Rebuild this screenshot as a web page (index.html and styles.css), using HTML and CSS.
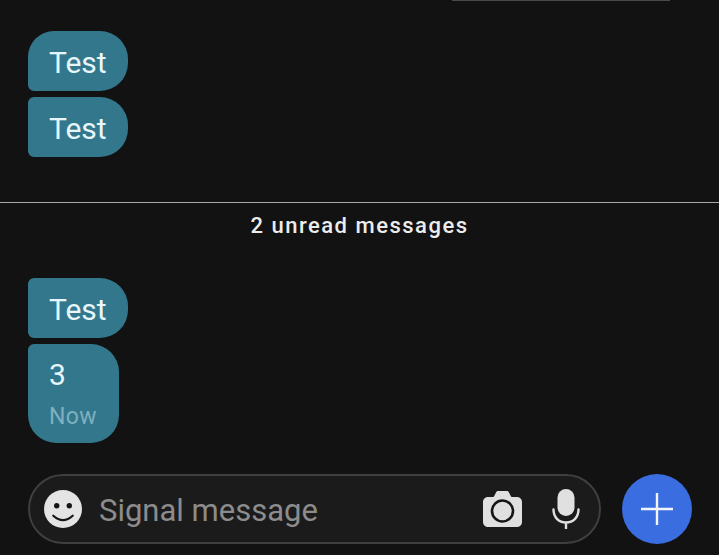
FILE: index.html
```html
<!DOCTYPE html>
<html lang="en">
<head>
    <meta charset="UTF-8">
    <meta name="viewport" content="width=device-width, initial-scale=1.0">
    <title>Signal</title>
    <link rel="stylesheet" href="styles.css">
</head>
<body>
    <div class="top-edge"><div class="prev-bubble"></div></div>

    <div class="messages">
        <div class="bubble first">Test</div>
        <div class="bubble last">Test</div>
    </div>

    <div class="unread">2 unread messages</div>

    <div class="messages">
        <div class="bubble last">Test</div>
        <div class="bubble end">
            3
            <span class="time">Now</span>
        </div>
    </div>

    <div class="composer">
        <div class="input">
            <svg class="smile" width="40" height="40" viewBox="0 0 40 40">
                <circle cx="20" cy="20" r="19" fill="#e4e4e4"/>
                <circle cx="13.700" cy="16.700" r="2.700" fill="#161616"/>
                <circle cx="26.300" cy="16.700" r="2.700" fill="#161616"/>
                <path d="M10.300 26.700Q20 35.500 29.700 26.700" fill="none" stroke="#161616" stroke-width="2.200" stroke-linecap="round"/>
            </svg>
            <span class="placeholder">Signal message</span>
            <svg class="camera" width="40" height="36" viewBox="0 0 40 36">
                <path d="M5 6h4.500c1 0 1.500-.5 2-1.500l1.500-3c.4-.9 1-1.500 2-1.500h9c1 0 1.600.6 2 1.500l1.500 3c.5 1 1 1.500 2 1.500H34c2.800 0 5 2.200 5 5v20c0 2.800-2.200 5-5 5H5c-2.800 0-5-2.200-5-5V11c0-2.800 2.200-5 5-5z" fill="#e0e0e0"/>
                <circle cx="19.500" cy="20" r="10.500" fill="none" stroke="#161616" stroke-width="2.600"/>
            </svg>
            <svg class="mic" width="30" height="40" viewBox="0 0 30 40">
                <rect x="6.500" y="0" width="17" height="27" rx="8.500" fill="#e0e0e0"/>
                <path d="M2.500 20.500c0 7.500 5 13 12.500 13s12.500-5.500 12.500-13M15 33.500V39.500" fill="none" stroke="#e0e0e0" stroke-width="2.400" stroke-linecap="round"/>
            </svg>
        </div>
        <div class="plus">
            <svg width="32" height="32" viewBox="0 0 32 32">
                <path d="M16 0v32M0 16h32" stroke="#f2f5fc" stroke-width="2.400"/>
            </svg>
        </div>
    </div>
</body>
</html>
```

FILE: styles.css
```css
body {
    margin: 0;
    height: 555px;
    overflow: hidden;
    background-color: #121212;
    color: #e6f6fa;
    font-family: Roboto, sans-serif;
}
.top-edge {
    height: 31px;
    padding-left: 452px;
}
.prev-bubble {
    width: 218px;
    height: 1px;
    background-color: #4a4a4a;
}
.messages {
    display: flex;
    flex-direction: column;
    align-items: flex-start;
    gap: 6px;
    padding-left: 28px;
}
.bubble {
    box-sizing: border-box;
    height: 60px;
    width: 100px;
    padding-left: 21px;
    font-size: 30px;
    line-height: 63px;
    background-color: #33778c;
    border-radius: 6px 28px 28px 6px;
}
.bubble.first {
    border-radius: 26px 28px 28px 6px;
}
.bubble.end {
    width: 91px;
    height: 99px;
    padding-top: 13px;
    line-height: 36px;
    border-radius: 6px 28px 28px 28px;
}
.time {
    display: block;
    margin-top: 9px;
    font-size: 23px;
    line-height: 30px;
    letter-spacing: 0.4px;
    color: #7fb0bf;
}
.unread {
    margin-top: 45px;
    margin-bottom: 35px;
    height: 40px;
    border-top: 1px solid #a8a8a8;
    text-align: center;
    font-size: 22px;
    font-weight: 500;
    line-height: 45px;
    letter-spacing: 1.5px;
    color: #ececec;
}
.composer {
    display: flex;
    align-items: center;
    gap: 21px;
    margin-top: 31px;
    padding-left: 28px;
}
.input {
    box-sizing: border-box;
    display: flex;
    align-items: center;
    width: 573px;
    height: 70px;
    padding: 0 18px 0 13px;
    background-color: #1b1b1b;
    border: 2px solid #3f3f3f;
    border-radius: 35px;
}
.placeholder {
    flex: 1;
    margin-left: 16px;
    padding-top: 2px;
    font-size: 31px;
    color: #8c8c8c;
}
.camera {
    margin-right: 28px;
}
.plus {
    display: flex;
    align-items: center;
    justify-content: center;
    width: 70px;
    height: 70px;
    background-color: #3a6ee0;
    border-radius: 50%;
}
```
